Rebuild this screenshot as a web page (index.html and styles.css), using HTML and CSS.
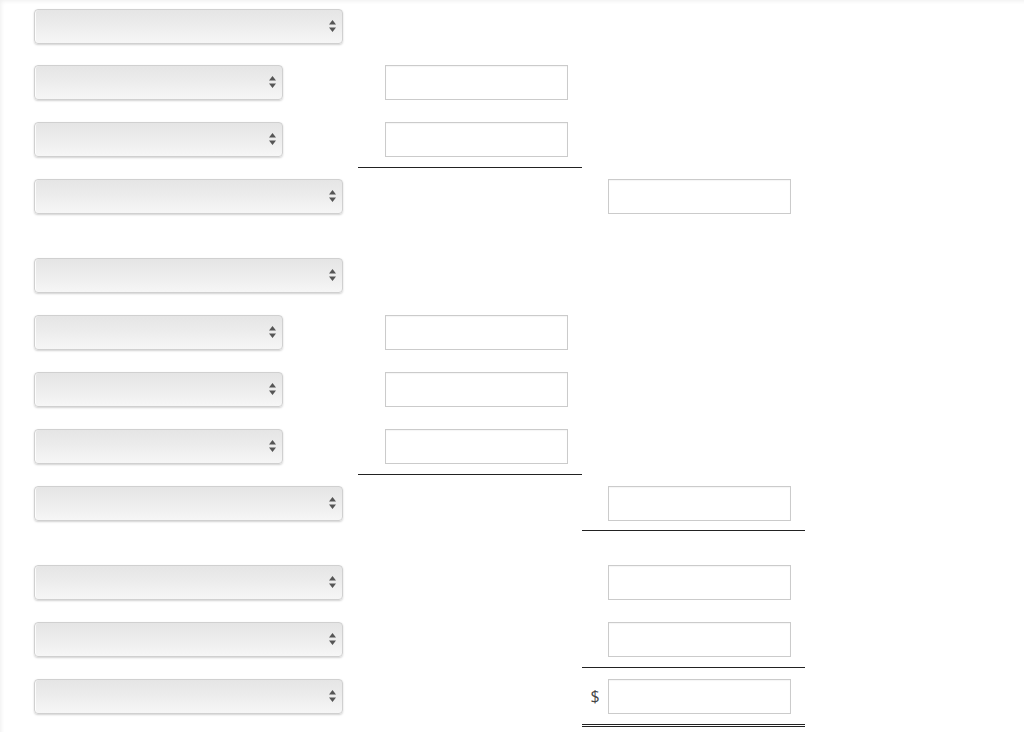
FILE: index.html
```html
<!DOCTYPE html>
<html lang="en">
<head>
    <meta charset="UTF-8">
    <meta name="viewport" content="width=device-width, initial-scale=1.0">
    <title>Worksheet</title>
    <link rel="stylesheet" href="styles.css">
</head>
<body>
    <div class="sheet">
        <!-- section 1 -->
        <div class="row">
            <div class="col-label"><div class="pick wide"><select></select><svg class="arrows" viewBox="0 0 7 12"><path d="M3.5 0 L7 4.5 L0 4.5 Z M0 7.5 L7 7.5 L3.5 12 Z"/></svg></div></div>
            <div class="col-mid"></div>
            <div class="col-total"></div>
        </div>
        <div class="row">
            <div class="col-label"><div class="pick narrow"><select></select><svg class="arrows" viewBox="0 0 7 12"><path d="M3.5 0 L7 4.5 L0 4.5 Z M0 7.5 L7 7.5 L3.5 12 Z"/></svg></div></div>
            <div class="col-mid"><input type="text" class="amount"></div>
            <div class="col-total"></div>
        </div>
        <div class="row">
            <div class="col-label"><div class="pick narrow"><select></select><svg class="arrows" viewBox="0 0 7 12"><path d="M3.5 0 L7 4.5 L0 4.5 Z M0 7.5 L7 7.5 L3.5 12 Z"/></svg></div></div>
            <div class="col-mid rule"><input type="text" class="amount"></div>
            <div class="col-total"></div>
        </div>
        <div class="row">
            <div class="col-label"><div class="pick wide"><select></select><svg class="arrows" viewBox="0 0 7 12"><path d="M3.5 0 L7 4.5 L0 4.5 Z M0 7.5 L7 7.5 L3.5 12 Z"/></svg></div></div>
            <div class="col-mid"></div>
            <div class="col-total"><span class="cur"></span><input type="text" class="amount"></div>
        </div>

        <div class="spacer"></div>

        <!-- section 2 -->
        <div class="row">
            <div class="col-label"><div class="pick wide"><select></select><svg class="arrows" viewBox="0 0 7 12"><path d="M3.5 0 L7 4.5 L0 4.5 Z M0 7.5 L7 7.5 L3.5 12 Z"/></svg></div></div>
            <div class="col-mid"></div>
            <div class="col-total"></div>
        </div>
        <div class="row">
            <div class="col-label"><div class="pick narrow"><select></select><svg class="arrows" viewBox="0 0 7 12"><path d="M3.5 0 L7 4.5 L0 4.5 Z M0 7.5 L7 7.5 L3.5 12 Z"/></svg></div></div>
            <div class="col-mid"><input type="text" class="amount"></div>
            <div class="col-total"></div>
        </div>
        <div class="row">
            <div class="col-label"><div class="pick narrow"><select></select><svg class="arrows" viewBox="0 0 7 12"><path d="M3.5 0 L7 4.5 L0 4.5 Z M0 7.5 L7 7.5 L3.5 12 Z"/></svg></div></div>
            <div class="col-mid"><input type="text" class="amount"></div>
            <div class="col-total"></div>
        </div>
        <div class="row">
            <div class="col-label"><div class="pick narrow"><select></select><svg class="arrows" viewBox="0 0 7 12"><path d="M3.5 0 L7 4.5 L0 4.5 Z M0 7.5 L7 7.5 L3.5 12 Z"/></svg></div></div>
            <div class="col-mid rule"><input type="text" class="amount"></div>
            <div class="col-total"></div>
        </div>
        <div class="row">
            <div class="col-label"><div class="pick wide"><select></select><svg class="arrows" viewBox="0 0 7 12"><path d="M3.5 0 L7 4.5 L0 4.5 Z M0 7.5 L7 7.5 L3.5 12 Z"/></svg></div></div>
            <div class="col-mid"></div>
            <div class="col-total rule"><span class="cur"></span><input type="text" class="amount"></div>
        </div>

        <div class="spacer"></div>

        <!-- section 3 -->
        <div class="row">
            <div class="col-label"><div class="pick wide"><select></select><svg class="arrows" viewBox="0 0 7 12"><path d="M3.5 0 L7 4.5 L0 4.5 Z M0 7.5 L7 7.5 L3.5 12 Z"/></svg></div></div>
            <div class="col-mid"></div>
            <div class="col-total"><span class="cur"></span><input type="text" class="amount"></div>
        </div>
        <div class="row">
            <div class="col-label"><div class="pick wide"><select></select><svg class="arrows" viewBox="0 0 7 12"><path d="M3.5 0 L7 4.5 L0 4.5 Z M0 7.5 L7 7.5 L3.5 12 Z"/></svg></div></div>
            <div class="col-mid"></div>
            <div class="col-total rule"><span class="cur"></span><input type="text" class="amount"></div>
        </div>
        <div class="row">
            <div class="col-label"><div class="pick wide"><select></select><svg class="arrows" viewBox="0 0 7 12"><path d="M3.5 0 L7 4.5 L0 4.5 Z M0 7.5 L7 7.5 L3.5 12 Z"/></svg></div></div>
            <div class="col-mid"></div>
            <div class="col-total double"><span class="cur">$</span><input type="text" class="amount"></div>
        </div>
    </div>
</body>
</html>
```

FILE: styles.css
```css
html, body {
    margin: 0;
    padding: 0;
    background: #fff;
}
body {
    font-family: "Open Sans", "Liberation Sans", Arial, sans-serif;
    color: #333;
    height: 732px;
    overflow: hidden;
    box-shadow: inset 3px 3px 4px -2px rgba(0, 0, 0, 0.07);
}
.sheet {
    padding-left: 34px;
}
.row {
    display: flex;
    height: 56.8px;
}
.spacer {
    height: 22.67px;
}
.col-label {
    width: 324px;
    padding-top: 8.5px;
}
.col-mid {
    width: 224px;
    height: 53px;
    padding-top: 8.5px;
    padding-left: 27px;
    box-sizing: border-box;
}
.col-total {
    width: 223px;
    height: 53px;
    padding-top: 8.5px;
    box-sizing: border-box;
    display: flex;
    align-items: flex-start;
}
.col-mid.rule, .col-total.rule {
    height: 54.4px;
    border-bottom: 1px solid #222;
}
.col-total.double {
    height: 56.8px;
    border-bottom: 3px double #222;
}
.cur {
    width: 26px;
    height: 35px;
    line-height: 34px;
    text-align: center;
    font-size: 16px;
    color: #444;
}

/* dropdowns */
.pick {
    position: relative;
    height: 35px;
}
.pick.wide {
    width: 309px;
}
.pick.narrow {
    width: 249px;
}
.pick select {
    -webkit-appearance: none;
    appearance: none;
    width: 100%;
    height: 35px;
    margin: 0;
    border: 1px solid #d0d0d0;
    border-radius: 4px;
    background: linear-gradient(to bottom, #e5e5e5 0%, #ececec 45%, #f6f6f6 100%);
    box-shadow: 0 1px 2px rgba(0, 0, 0, 0.18), inset 1px 0 0 rgba(255, 255, 255, 0.8);
    box-sizing: border-box;
}
.pick .arrows {
    position: absolute;
    right: 7px;
    top: 11px;
    width: 7px;
    height: 12px;
    fill: #555;
    pointer-events: none;
}

/* amount boxes */
.amount {
    width: 183px;
    height: 35px;
    margin: 0;
    padding: 0 6px;
    border: 1px solid #cbcbcb;
    border-radius: 0;
    box-sizing: border-box;
    background: #fff;
    box-shadow: inset 0 1px 1px rgba(0, 0, 0, 0.04);
    font-size: 14px;
}
```
